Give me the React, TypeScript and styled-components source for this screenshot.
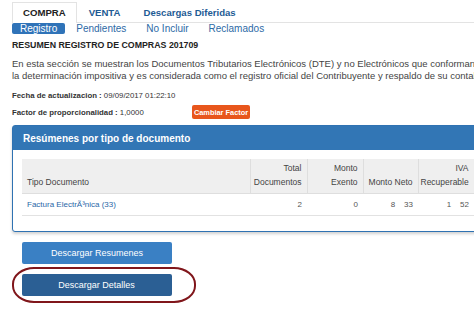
import React from 'react';
import styled, { createGlobalStyle } from 'styled-components';

const GlobalStyle = createGlobalStyle`
  html, body {
    margin: 0;
    padding: 0;
    background: #ffffff;
    overflow: hidden;
  }
  body {
    font-family: 'Liberation Sans', Arial, sans-serif;
    color: #333;
  }
`;

const Page = styled.div`
  width: 620px;
  padding: 0 0 0 12px;
`;

// Tabs
const TabBar = styled.div`
  display: flex;
  align-items: flex-end;
  height: 22px;
  border-bottom: 1px solid #e3e3e3;
`;

const Tab = styled.div<{ $active?: boolean }>`
  height: 19px;
  display: flex;
  align-items: center;
  padding: 0 10px;
  margin-right: 1px;
  margin-bottom: -1px;
  font-size: 9.6px;
  font-weight: bold;
  color: ${p => (p.$active ? '#222' : '#1e5b94')};
  background: ${p => (p.$active ? '#fff' : 'transparent')};
  border: 1px solid ${p => (p.$active ? '#e3e3e3' : 'transparent')};
  border-bottom: none;
  padding-bottom: 1px;
`;

const SubNav = styled.div`
  display: flex;
  align-items: center;
  height: 11px;
  gap: 11px;
`;

const SubItem = styled.div<{ $active?: boolean }>`
  font-size: 10px;
  line-height: 11px;
  padding: 0 ${p => (p.$active ? '8px' : '0')};
  margin-right: ${p => (p.$active ? '0' : '9px')};
  border-radius: 2px;
  color: ${p => (p.$active ? '#fff' : '#2d6aa6')};
  background: ${p => (p.$active ? '#2f73b8' : 'transparent')};
`;

const Title = styled.div`
  margin-top: 6px;
  font-size: 8.8px;
  font-weight: bold;
  color: #222;
`;

const Intro = styled.p`
  margin: 8px 0 0 0;
  font-size: 9.5px;
  line-height: 12px;
  color: #444;
  white-space: nowrap;
`;

const InfoRow = styled.div<{ $gap: number }>`
  display: flex;
  align-items: center;
  margin-top: ${p => p.$gap}px;
  font-size: 7.8px;
  color: #333;
  height: 14px;
`;

const Label = styled.span`
  font-weight: bold;
  color: #333;
`;

const FactorInfo = styled.span`
  width: 180px;
`;

const OrangeButton = styled.button`
  height: 14px;
  width: 58px;
  padding: 0;
  border: none;
  border-radius: 2px;
  background: #e8561c;
  color: #fff;
  font-family: inherit;
  font-size: 7.4px;
  font-weight: bold;
  white-space: nowrap;
`;

// Panel
const Panel = styled.div`
  margin-top: 6px;
  border: 1px solid #2f72b2;
  border-radius: 3px;
  box-shadow: 0 2px 3px rgba(0, 0, 0, 0.18);
  background: #fff;
`;

const PanelHeading = styled.div`
  height: 24px;
  background: #3276b5;
  color: #fff;
  font-size: 10px;
  font-weight: bold;
  display: flex;
  align-items: center;
  padding-left: 10px;
`;

const PanelBody = styled.div`
  padding: 9px 9px 15px 9px;
`;

const Table = styled.table`
  border-collapse: collapse;
  table-layout: fixed;
  width: 522px;
  font-size: 8px;
`;

const Th = styled.th<{ $w: number; $left?: boolean }>`
  width: ${p => p.$w}px;
  background: #efefef;
  color: #444;
  font-weight: normal;
  font-size: 8.5px;
  text-align: ${p => (p.$left ? 'left' : 'right')};
  vertical-align: bottom;
  height: 34px;
  padding: 0 5px 4px 2px;
  line-height: 14px;
  box-sizing: border-box;
  white-space: nowrap;
  border-left: 1px solid #dedede;
  border-bottom: 1px solid #dedede;
  &:first-child {
    border-left: none;
    padding-left: 5px;
  }
`;

const Td = styled.td<{ $left?: boolean }>`
  height: 21px;
  padding: 0 5px;
  text-align: ${p => (p.$left ? 'left' : 'right')};
  color: #555;
  border-bottom: 1px solid #e2e2e2;
`;

const DocLink = styled.a`
  color: #2a67a8;
  text-decoration: none;
`;

// Buttons
const Actions = styled.div`
  display: flex;
  flex-direction: column;
  align-items: flex-start;
  padding-top: 10px;
`;

const BlueButton = styled.button<{ $dark?: boolean }>`
  width: 150px;
  height: 22px;
  border: none;
  border-radius: 2px;
  background: ${p => (p.$dark ? '#2b5f94' : '#3a80c4')};
  color: #fff;
  font-family: inherit;
  font-size: 9px;
  cursor: pointer;
`;

const FirstButtonWrap = styled.div`
  padding-left: 10px;
`;

const Highlight = styled.div`
  margin-top: 3px;
  width: 172px;
  height: 32px;
  border: 2.5px solid #80161b;
  border-radius: 22px / 17px;
  display: flex;
  align-items: center;
  padding-left: 7.5px;
`;

export default function App() {
  return (
    <Page>
      <GlobalStyle />
      <TabBar>
        <Tab $active>COMPRA</Tab>
        <Tab>VENTA</Tab>
        <Tab>Descargas Diferidas</Tab>
      </TabBar>
      <SubNav>
        <SubItem $active>Registro</SubItem>
        <SubItem>Pendientes</SubItem>
        <SubItem>No Incluir</SubItem>
        <SubItem>Reclamados</SubItem>
      </SubNav>

      <Title>RESUMEN REGISTRO DE COMPRAS 201709</Title>
      <Intro>
        En esta sección se muestran los Documentos Tributarios Electrónicos (DTE) y no Electrónicos que conforman la base para
        <br />
        la determinación impositiva y es considerada como el registro oficial del Contribuyente y respaldo de su contabilidad.
      </Intro>

      <InfoRow $gap={6}>
        <Label>Fecha de actualizacion :</Label>&nbsp;09/09/2017 01:22:10
      </InfoRow>
      <InfoRow $gap={3}>
        <FactorInfo>
          <Label>Factor de proporcionalidad :</Label>&nbsp;1,0000
        </FactorInfo>
        <OrangeButton>Cambiar Factor</OrangeButton>
      </InfoRow>

      <Panel>
        <PanelHeading>Resúmenes por tipo de documento</PanelHeading>
        <PanelBody>
          <Table>
            <thead>
              <tr>
                <Th $w={228} $left>Tipo Documento</Th>
                <Th $w={57}>Total<br />Documentos</Th>
                <Th $w={56}>Monto<br />Exento</Th>
                <Th $w={55}>Monto Neto</Th>
                <Th $w={56}>IVA<br />Recuperable</Th>
                <Th $w={70}>IVA Uso<br />Común</Th>
              </tr>
            </thead>
            <tbody>
              <tr>
                <Td $left><DocLink href="#">Factura ElectrÃ³nica (33)</DocLink></Td>
                <Td>2</Td>
                <Td>0</Td>
                <Td>8&nbsp;&nbsp;&nbsp;&nbsp;33</Td>
                <Td>1&nbsp;&nbsp;&nbsp;&nbsp;52</Td>
                <Td>0</Td>
              </tr>
            </tbody>
          </Table>
        </PanelBody>
      </Panel>

      <Actions>
        <FirstButtonWrap>
          <BlueButton>Descargar Resumenes</BlueButton>
        </FirstButtonWrap>
        <Highlight>
          <BlueButton $dark>Descargar Detalles</BlueButton>
        </Highlight>
      </Actions>
    </Page>
  );
}
